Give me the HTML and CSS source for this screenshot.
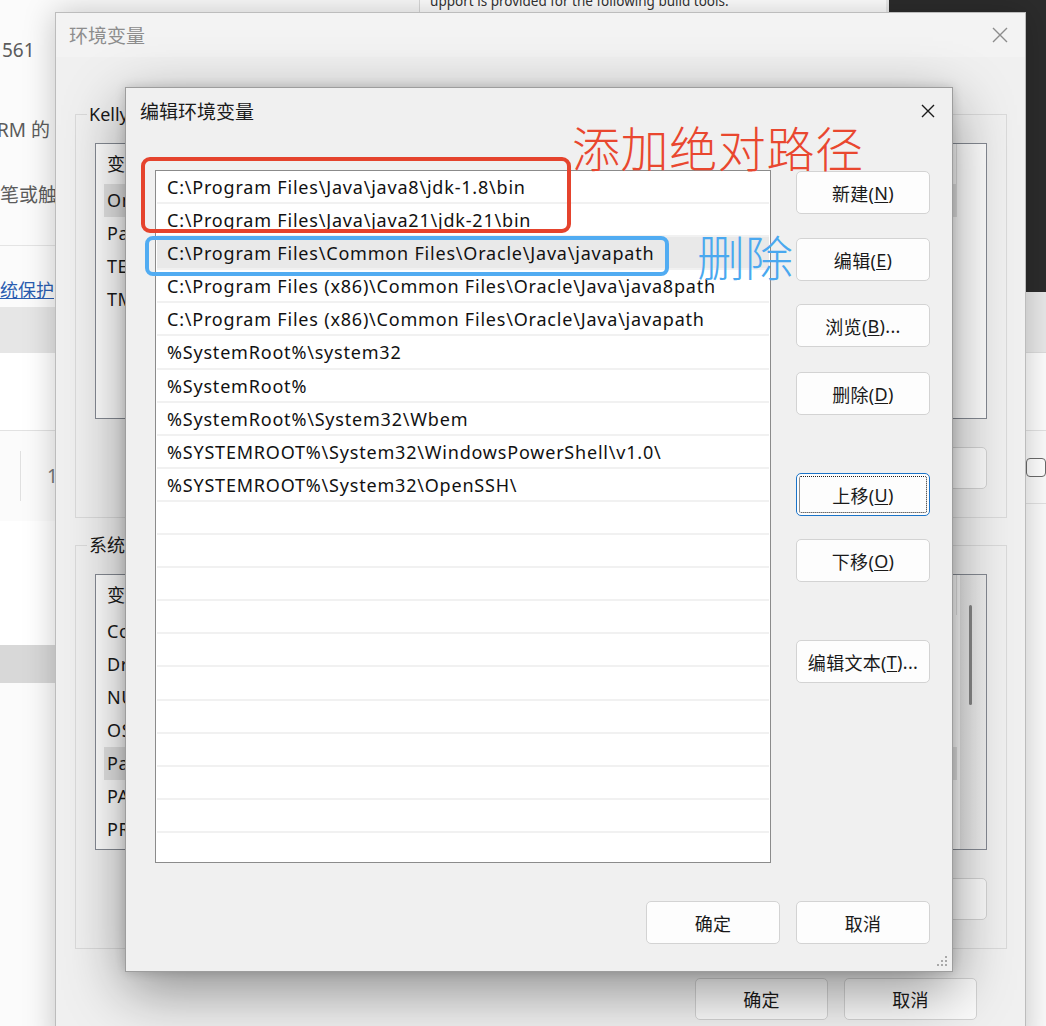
FILE: index.html
```html
<!DOCTYPE html>
<html lang="zh-CN">
<head>
<meta charset="utf-8">
<title>编辑环境变量</title>
<link rel="stylesheet" href="styles.css">
</head>
<body>
<div class="desk">
  <div class="bgapp">
    <div class="bg-left">
      <div class="l1">561</div>
      <div class="l2">RM 的</div>
      <div class="l3">笔或触</div>
      <div class="l-sep"></div>
      <div class="l-link">统保护</div>
      <div class="l-band"></div>
      <div class="l-white"></div>
      <div class="l-tools"><span class="l-vline"></span><span class="l-one">1</span></div>
      <div class="l-white2"></div>
      <div class="l-band2"></div>
    </div>
    <div class="bg-mid">
      <div class="mid-text">upport is provided for the following build tools:</div>
    </div>
    <div class="bg-right">
      <div class="r-dark"></div>
      <div class="r-gray"></div>
      <div class="r-white"></div>
      <div class="r-chk"><span class="chk"></span></div>
      <div class="r-rest"></div>
    </div>
  </div>

  <section class="outer">
    <div class="o-title">
      <span>环境变量</span>
      <svg class="o-x" width="16" height="16" viewBox="0 0 16 16"><path d="M1 1L15 15M15 1L1 15" stroke="#8c8c8c" stroke-width="1.4" fill="none"/></svg>
    </div>
    <div class="o-body">
      <div class="group">
        <div class="group-label">Kelly 的用户变量(<u>U</u>)</div>
        <div class="o-list">
          <div class="o-head"><span class="c1">变量</span><span class="c2">值</span></div>
          <div class="o-row sel">OneDrive</div>
          <div class="o-row">Path</div>
          <div class="o-row">TEMP</div>
          <div class="o-row">TMP</div>
        </div>
        <div class="o-btns">
          <div class="btn obtn">新建(<u>N</u>)...</div>
          <div class="btn obtn">编辑(<u>E</u>)...</div>
          <div class="btn obtn">删除(<u>D</u>)</div>
        </div>
      </div>
      <div class="group g2">
        <div class="group-label">系统变量(<u>S</u>)</div>
        <div class="o-list">
          <div class="o-head"><span class="c1">变量</span><span class="c2">值</span></div>
          <div class="o-row">ComSpec</div>
          <div class="o-row">DriverData</div>
          <div class="o-row">NUMBER_OF_PROCESSORS</div>
          <div class="o-row">OS</div>
          <div class="o-row sel">Path</div>
          <div class="o-row">PATHEXT</div>
          <div class="o-row">PROCESSOR_ARCHITECTURE</div>
          <span class="track"><span class="thumb"></span></span>
        </div>
        <div class="o-btns">
          <div class="btn obtn">新建(<u>W</u>)...</div>
          <div class="btn obtn">编辑(<u>I</u>)...</div>
          <div class="btn obtn">删除(<u>L</u>)</div>
        </div>
      </div>
      <div class="o-foot">
        <div class="btn obtn">确定</div>
        <div class="btn obtn">取消</div>
      </div>
    </div>
  </section>

  <section class="inner">
    <div class="i-title">
      <span>编辑环境变量</span>
      <svg class="i-x" width="14" height="14" viewBox="0 0 14 14"><path d="M1 1L13 13M13 1L1 13" stroke="#1a1a1a" stroke-width="1.4" fill="none"/></svg>
    </div>
    <div class="i-main">
      <div class="i-list">
        <div class="i-row">C:\Program Files\Java\java8\jdk-1.8\bin</div>
        <div class="i-row">C:\Program Files\Java\java21\jdk-21\bin</div>
        <div class="i-row sel">C:\Program Files\Common Files\Oracle\Java\javapath</div>
        <div class="i-row">C:\Program Files (x86)\Common Files\Oracle\Java\java8path</div>
        <div class="i-row">C:\Program Files (x86)\Common Files\Oracle\Java\javapath</div>
        <div class="i-row">%SystemRoot%\system32</div>
        <div class="i-row">%SystemRoot%</div>
        <div class="i-row">%SystemRoot%\System32\Wbem</div>
        <div class="i-row">%SYSTEMROOT%\System32\WindowsPowerShell\v1.0\</div>
        <div class="i-row">%SYSTEMROOT%\System32\OpenSSH\</div>
        <div class="i-row"></div>
        <div class="i-row"></div>
        <div class="i-row"></div>
        <div class="i-row"></div>
        <div class="i-row"></div>
        <div class="i-row"></div>
        <div class="i-row"></div>
        <div class="i-row"></div>
        <div class="i-row"></div>
        <div class="i-row"></div>
        <div class="i-row"></div>
        <div class="i-row"></div>
      </div>
      <div class="i-side">
        <div class="btn">新建(<u>N</u>)</div>
        <div class="btn gap-s">编辑(<u>E</u>)</div>
        <div class="btn gap-s2">浏览(<u>B</u>)...</div>
        <div class="btn gap-s3">删除(<u>D</u>)</div>
        <div class="btn focus gap-l">上移(<u>U</u>)</div>
        <div class="btn gap-s2">下移(<u>O</u>)</div>
        <div class="btn gap-l">编辑文本(<u>T</u>)...</div>
      </div>
    </div>
    <div class="i-foot">
      <div class="btn">确定</div>
      <div class="btn">取消</div>
    </div>
    <svg class="grip" width="12" height="12" viewBox="0 0 12 12">
      <g fill="#a9a9a9">
        <rect x="9" y="1" width="2" height="2"/>
        <rect x="5" y="5" width="2" height="2"/><rect x="9" y="5" width="2" height="2"/>
        <rect x="1" y="9" width="2" height="2"/><rect x="5" y="9" width="2" height="2"/><rect x="9" y="9" width="2" height="2"/>
      </g>
    </svg>
  </section>

  <div class="note-box red"></div>
  <div class="note-text red-t">添加绝对路径</div>
  <div class="note-box blue"></div>
  <div class="note-text blue-t">删除</div>
</div>
</body>
</html>
```
FILE: styles.css
```css
* { box-sizing: border-box; }
html, body { margin: 0; padding: 0; }
body {
  width: 1046px;
  height: 1026px;
  overflow: hidden;
  background: #fafafa;
  font-family: "Noto Sans", "Noto Sans CJK SC", sans-serif;
  color: #1a1a1a;
}
u { text-decoration: underline; text-underline-offset: 2px; text-decoration-thickness: 1px; }

.desk { position: relative; width: 1046px; height: 1026px; overflow: hidden; }

/* ---------- background application ---------- */
.bgapp { position: absolute; inset: 0; display: flex; }
.bg-left {
  width: 421px;
  display: flex;
  flex-direction: column;
  background: #fbfbfb;
  color: #5c5c5c;
  font-size: 19px;
  white-space: nowrap;
}
.l1 { height: 100px; line-height: 100px; padding-left: 2px; }
.l2 { height: 60px; line-height: 60px; margin-left: -3px; }
.l3 { height: 70px; line-height: 70px; }
.l-sep { height: 16px; border-bottom: 1px solid #e4e4e4; }
.l-link { height: 61px; padding-top: 32px; line-height: 24px; color: #2a5db0; font-size: 18px; text-decoration: underline; }
.l-band { height: 46px; background: #e6e6e6; }
.l-white { height: 78px; background: #ffffff; border-bottom: 1px solid #e2e2e2; }
.l-tools { height: 90px; position: relative; display: flex; align-items: center; gap: 26px; padding-left: 20px; }
.l-vline { width: 1px; height: 50px; background: #e0e0e0; }
.l-one { color: #777; font-size: 19px; }
.l-white2 { height: 124px; background: #ffffff; }
.l-band2 { height: 38px; background: #d8d8d8; }

.bg-mid { width: 472px; background: #ffffff; border-left: 1px solid #dadada; border-right: 3px solid #ececec; }
.mid-text { margin: -8px 0 0 10px; font-size: 13.5px; line-height: 18px; color: #333; white-space: nowrap; }

.bg-right { flex: 1; display: flex; flex-direction: column; }
.r-dark { height: 292px; background: #2c2c2c; }
.r-gray { height: 61px; background: #e8e8e8; border-bottom: 1px solid #dcdcdc; }
.r-white { height: 78px; background: #fdfdfd; border-bottom: 1px solid #e2e2e2; }
.r-chk { height: 73px; padding: 27px 0 0 137px; background: #fbfbfb; border-bottom: 1px solid #e2e2e2; }
.chk { display: block; width: 20px; height: 19px; border: 1.5px solid #6b6b6b; border-radius: 4px; background: #fff; }
.r-rest { flex: 1; background: #fbfbfb; }

/* ---------- outer dialog ---------- */
.outer {
  position: absolute;
  left: 55px;
  top: 12px;
  width: 971px;
  height: 1040px;
  background: #f0f0f0;
  border: 1px solid #bcbcbc;
  box-shadow: 0 0 30px rgba(0, 0, 0, 0.22);
  display: flex;
  flex-direction: column;
}
.o-title {
  height: 44px;
  display: flex;
  align-items: center;
  justify-content: space-between;
  padding: 0 17px 0 13px;
  color: #8d8d8d;
  font-size: 19px;
  background: #f3f3f3;
}
.o-body { padding: 0 18px 0 19px; display: flex; flex-direction: column; }
.group {
  margin-top: 57px;
  height: 404px;
  border: 1px solid #dadada;
  padding: 0 19px;
  display: flex;
  flex-direction: column;
}
.group.g2 { margin-top: 27px; }
.group-label {
  margin: -13px 0 0 -8px;
  padding: 0 2px;
  width: fit-content;
  line-height: 24px;
  font-size: 18px;
  background: #f0f0f0;
  color: #1a1a1a;
  white-space: nowrap;
}
.o-list {
  position: relative;
  margin-top: 17px;
  height: 276px;
  background: #ffffff;
  border: 1px solid #858a93;
  overflow: hidden;
  font-size: 18px;
  letter-spacing: 0.6px;
  white-space: nowrap;
}
.o-head { height: 40px; line-height: 40px; padding-left: 11px; display: flex; margin-right: 29px; }
.o-head .c1 { width: 300px; }
.o-head .c2 { flex: 1; border-right: 1px solid #e3e3e3; }
.o-row { height: 33px; line-height: 33px; margin: 0 29px 0 8px; padding-left: 3px; }
.o-row.sel { background: #e5e5e5; }
.track { position: absolute; right: 0; top: 0; bottom: 0; width: 26px; background: linear-gradient(90deg, #e6e6e6, #efefef); }
.thumb { position: absolute; left: 9px; top: 30px; width: 3px; height: 100px; border-radius: 2px; background: #868686; }
.o-btns { display: flex; justify-content: flex-end; gap: 16px; margin-top: 28px; }
.o-foot { display: flex; justify-content: flex-end; gap: 16px; margin: 29px 30px 0 0; }

/* ---------- buttons ---------- */
.btn {
  width: 134px;
  height: 43px;
  border: 1px solid #d3d3d3;
  border-radius: 5px;
  background: #fdfdfd;
  font-size: 18px;
  letter-spacing: 0.3px;
  color: #1a1a1a;
  display: flex;
  align-items: center;
  justify-content: center;
  white-space: nowrap;
  position: relative;
}
.btn.obtn { width: 133px; height: 42px; background: #fbfbfb; }
.btn.focus { border: 1px solid #1a73c8; }
.btn.focus::after {
  content: "";
  position: absolute;
  inset: 2px;
  border: 1px dotted #222;
  border-radius: 2px;
}
.gap-s { margin-top: 24px; }
.gap-s2 { margin-top: 23px; }
.gap-s3 { margin-top: 25px; }
.gap-l { margin-top: 58px; }

/* ---------- inner dialog ---------- */
.inner {
  position: absolute;
  left: 125px;
  top: 87px;
  width: 828px;
  height: 885px;
  background: #f0f0f0;
  border: 1px solid #9d9d9d;
  box-shadow: 0 18px 56px rgba(0, 0, 0, 0.42), 0 0 10px rgba(0, 0, 0, 0.16);
}
.i-title {
  height: 46px;
  display: flex;
  align-items: center;
  justify-content: space-between;
  padding: 0 17px 0 14px;
  font-size: 19px;
  color: #1a1a1a;
}
.i-main { display: flex; gap: 25px; padding-left: 29px; margin-top: 36px; }
.i-list {
  width: 616px;
  height: 693px;
  background: #ffffff;
  border: 1px solid #8b8b8b;
  overflow: hidden;
}
.i-row {
  height: 33.1px;
  margin: 0 1px;
  padding-left: 10px;
  border-bottom: 2px solid #f1f1f1;
  line-height: 32px;
  font-size: 18px;
  letter-spacing: 0.8px;
  color: #111;
  white-space: nowrap;
}
.i-row.sel { background: #e9e9e9; }
.i-side { width: 134px; display: flex; flex-direction: column; padding-top: 1px; }
.i-foot { display: flex; justify-content: flex-end; gap: 16px; padding-right: 22px; margin-top: 38px; }
.grip { position: absolute; right: 4px; bottom: 4px; }

/* ---------- annotations ---------- */
.note-box { position: absolute; border-radius: 9px; }
.note-box.red { left: 141px; top: 157px; width: 430px; height: 76px; border: 4px solid #e5432d; }
.note-box.blue { left: 145px; top: 236px; width: 524px; height: 40px; border: 4px solid #51acf2; border-radius: 8px; }
.note-text {
  position: absolute;
  font-family: "Noto Sans CJK SC", sans-serif;
  font-weight: 300;
  font-size: 48px;
  line-height: 48px;
  white-space: nowrap;
}
.red-t { left: 572px; top: 122px; color: #e9472f; letter-spacing: 0.6px; }
.blue-t { left: 697px; top: 231px; color: #4aa8ef; }
```
